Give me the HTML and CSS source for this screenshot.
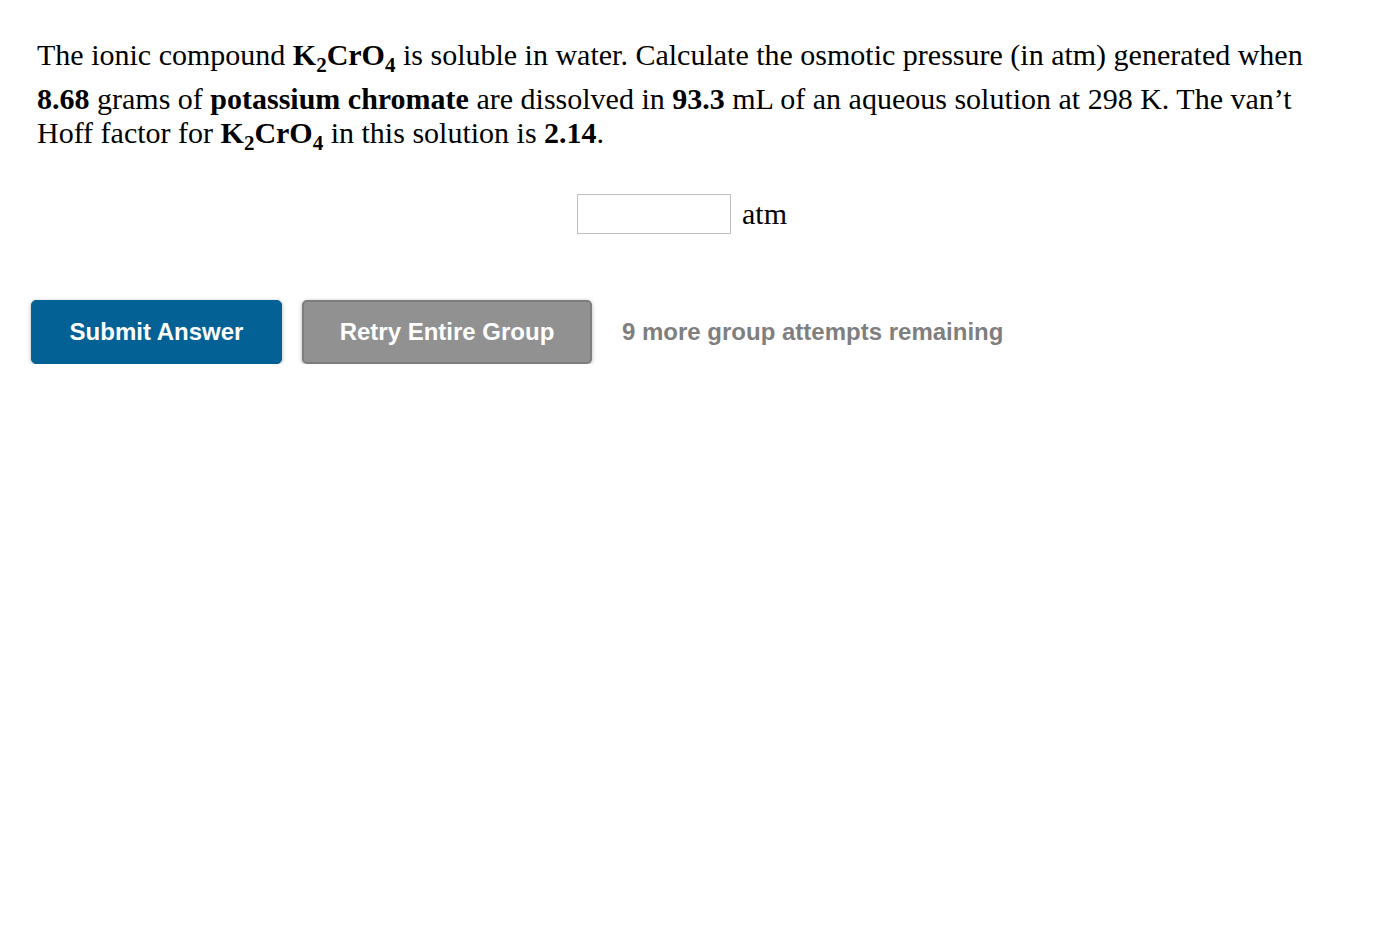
FILE: index.html
```html
<!DOCTYPE html>
<html>
<head>
<meta charset="utf-8">
<link rel="stylesheet" href="styles.css">
</head>
<body>
<div class="page">
  <p class="question">The ionic compound <b>K<sub>2</sub>CrO<sub>4</sub></b> is soluble in water. Calculate the osmotic pressure (in atm) generated when <b>8.68</b> grams of <b>potassium chromate</b> are dissolved in <b>93.3</b> mL of an aqueous solution at 298 K. The van’t Hoff factor for <b>K<sub>2</sub>CrO<sub>4</sub></b> in this solution is <b>2.14</b>.</p>
  <div class="answer">
    <input class="field" type="text"><span class="unit">atm</span>
  </div>
  <div class="actions">
    <button class="btn btn-primary">Submit Answer</button>
    <button class="btn btn-secondary">Retry Entire Group</button>
    <span class="remaining">9 more group attempts remaining</span>
  </div>
</div>
</body>
</html>
```
FILE: styles.css
```css
html, body {
  margin: 0;
  padding: 0;
  background: #fff;
}
.page {
  padding: 38px 37px 0 37px;
  font-family: "Liberation Serif", "Times New Roman", serif;
  color: #000;
}
.question {
  margin: 0;
  max-width: 1290px;
  font-size: 30px;
  line-height: 34px;
}
.question sub {
  font-size: 21px;
  vertical-align: sub;
}
.answer {
  margin-top: 34px;
  display: flex;
  justify-content: center;
  align-items: center;
  gap: 11px;
  padding-right: 14px;
}
.field {
  width: 154px;
  height: 40px;
  box-sizing: border-box;
  border: 1px solid #c0c0c0;
  margin: 0;
  padding: 0 6px;
  font-size: 20px;
}
.unit {
  font-size: 30px;
}
.actions {
  margin-top: 66px;
  margin-left: -6px;
  display: flex;
  align-items: center;
  gap: 20px;
}
.btn {
  height: 64px;
  box-sizing: border-box;
  border-radius: 5px;
  font-family: "Liberation Sans", Arial, sans-serif;
  font-weight: bold;
  font-size: 24px;
  color: #fff;
  padding: 0;
  margin: 0;
  box-shadow: 0 1px 4px rgba(0,0,0,0.3);
  cursor: pointer;
}
.btn-primary {
  width: 251px;
  background: #036195;
  border: 1px solid #036195;
}
.btn-secondary {
  width: 290px;
  background: #919191;
  border: 2px solid #7d7d7d;
}
.remaining {
  margin-left: 10px;
  font-family: "Liberation Sans", Arial, sans-serif;
  font-weight: bold;
  font-size: 24px;
  color: #7f7f7f;
}
```
